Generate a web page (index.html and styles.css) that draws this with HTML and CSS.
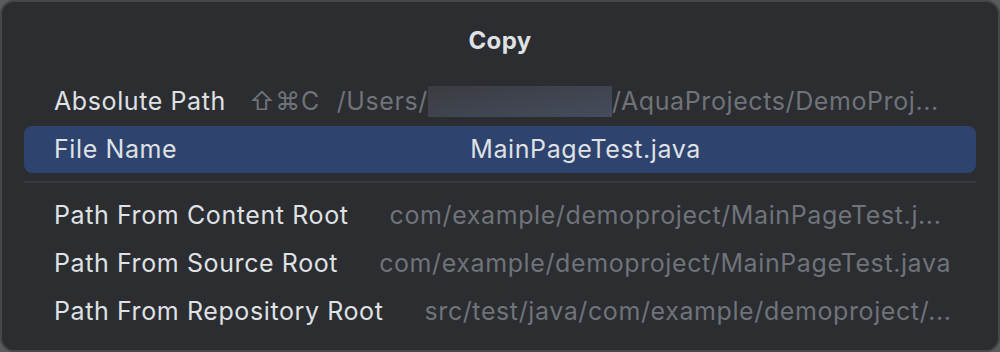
FILE: index.html
```html
<!DOCTYPE html>
<html lang="en">

<head>
  <meta charset="UTF-8" />
  <title>Copy</title>
  <link rel="stylesheet" href="styles.css">
</head>

<body>
  <div class="popup">
    <div class="title">Copy</div>

    <div class="list">
      <div class="item">
        <span class="label">Absolute Path</span>
        <span class="shortcut">⇧⌘C</span>
        <span class="value">/Users/<span class="redacted"></span>/AquaProjects/DemoProj...</span>
      </div>
      <div class="item selected">
        <span class="label">File Name</span>
        <span class="value file">MainPageTest.java</span>
      </div>
    </div>

    <div class="separator"></div>

    <div class="list">
      <div class="item">
        <span class="label">Path From Content Root</span>
        <span class="value">com/example/demoproject/MainPageTest.j...</span>
      </div>
      <div class="item">
        <span class="label">Path From Source Root</span>
        <span class="value">com/example/demoproject/MainPageTest.java</span>
      </div>
      <div class="item">
        <span class="label">Path From Repository Root</span>
        <span class="value">src/test/java/com/example/demoproject/...</span>
      </div>
    </div>
  </div>
</body>

</html>
```

FILE: styles.css
```css
body {
  margin: 0;
  background: #5a5b5f;
  font-family: 'Inter', 'Noto Sans', sans-serif;
}

.popup {
  box-sizing: border-box;
  width: 1000px;
  height: 352px;
  background: #2b2d30;
  border: 2px solid #45474b;
  border-radius: 14px;
  padding: 0 22px;
  overflow: hidden;
}

.title {
  text-align: center;
  color: #dfe1e5;
  font-weight: 700;
  font-size: 24px;
  letter-spacing: 0.4px;
  padding-top: 24px;
  height: 50px;
  box-sizing: border-box;
  margin-bottom: 26px;
}

.item {
  box-sizing: border-box;
  display: flex;
  align-items: center;
  height: 47px;
  padding: 0 30px 1px;
  border-radius: 8px;
  font-size: 25px;
  letter-spacing: 0.6px;
  white-space: nowrap;
  margin-bottom: 1px;
}

.item.selected {
  background: #2e436e;
}

.label {
  color: #dfe1e5;
  margin-right: 41px;
}

.shortcut {
  color: #6f737a;
  margin-left: -18px;
  margin-right: 17px;
}

.value {
  color: #6f737a;
  display: flex;
  align-items: center;
}

.value.file {
  color: #dfe1e5;
  margin-left: 252px;
}

.redacted {
  display: inline-block;
  width: 184px;
  height: 31px;
  background: linear-gradient(170deg, #3a3c40, #464c5e);
}

.separator {
  height: 2px;
  background: #393b40;
  margin: 8px 0 9px;
}
```
